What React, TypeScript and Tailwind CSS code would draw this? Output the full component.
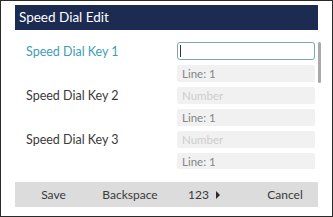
import React from "react";

const Field = ({ children, tone }: { children?: React.ReactNode; tone: "line" | "num" }) => (
  <div
    className={`h-[17px] w-[138px] rounded-[2px] bg-[#f1f1f1] pl-[5px] text-[11.5px] leading-[17px] ${
      tone === "line" ? "text-[#858585]" : "text-[#cdcdcd]"
    }`}
  >
    {children}
  </div>
);

export default function App() {
  return (
    <div
      className="box-border flex h-[217px] w-[333px] flex-col border border-[#2a2a2a] bg-white"
      style={{ fontFamily: "Lato, 'Open Sans', sans-serif" }}
    >
      <div className="mx-[14px] mt-[4px] flex h-[25px] items-center bg-[#1c2b52] pl-[4px] text-[13.5px] text-white">
        Speed Dial Edit
      </div>
      <div className="relative mt-[12px] flex h-[127px] flex-col overflow-hidden">
        <div className="absolute left-[317px] top-0 h-[41px] w-[3px] rounded-sm bg-[#a9a9a9]" />
        <div className="flex">
          <div className="w-[176px] pl-[25px] pt-[1px] text-[12.5px] leading-[17px] text-[#3d9db4]">Speed Dial Key 1</div>
          <div className="flex flex-col gap-[5px]">
            <div className="flex h-[18px] w-[138px] items-center rounded-[3px] border border-[#7ea7a9] bg-white pl-[2px]">
              <div className="h-[12px] w-[1px] bg-[#333]" />
            </div>
            <Field tone="line">Line: 1</Field>
          </div>
        </div>
        <div className="mt-[5px] flex">
          <div className="w-[176px] pl-[25px] text-[12.5px] leading-[17px] text-[#3a3a3a]">Speed Dial Key 2</div>
          <div className="flex flex-col gap-[5px]">
            <Field tone="num">Number</Field>
            <Field tone="line">Line: 1</Field>
          </div>
        </div>
        <div className="mt-[5px] flex">
          <div className="w-[176px] pl-[25px] text-[12.5px] leading-[17px] text-[#3a3a3a]">Speed Dial Key 3</div>
          <div className="flex flex-col gap-[5px]">
            <Field tone="num">Number</Field>
            <Field tone="line">Line: 1</Field>
          </div>
        </div>
      </div>
      <div className="mx-[14px] mt-[13px] flex h-[25px] items-center bg-[#dcdcdc] text-[12px] text-[#3a3a3a]">
        <div className="w-[77px] text-center">Save</div>
        <div className="w-[76px] text-center">Backspace</div>
        <div className="flex w-[72px] items-center justify-center gap-[7px]">
          <span>123</span>
          <svg width="4" height="8" viewBox="0 0 4 8">
            <path d="M0 0 L4 4 L0 8 Z" fill="#2a2a2a" />
          </svg>
        </div>
        <div className="flex-1 pl-[12px] text-center">Cancel</div>
      </div>
    </div>
  );
}
